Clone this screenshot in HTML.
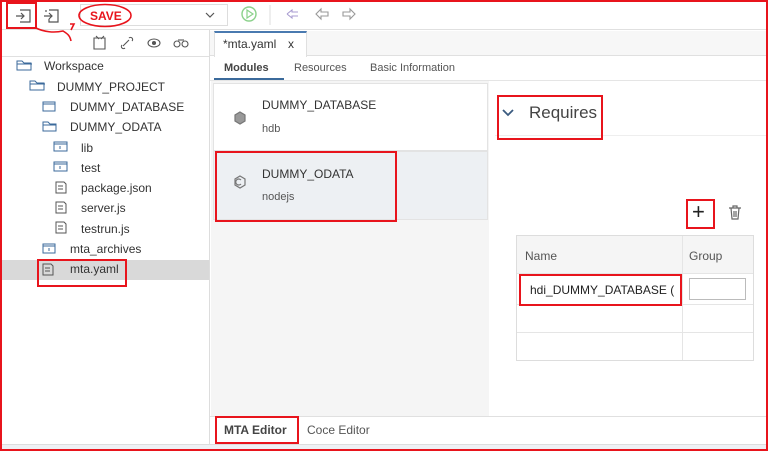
<!DOCTYPE html>
<html><head><style>
*{box-sizing:border-box;margin:0;padding:0}
body{width:768px;height:451px;position:relative;overflow:hidden;background:#fff;font-family:"Liberation Sans",sans-serif;color:#333}
.a{position:absolute}
.t{position:absolute;font-size:12px;color:#333;white-space:nowrap}
.red{position:absolute;border:2px solid #e8141c}
</style></head><body>
<div class="a" style="left:0;top:0;width:768px;height:30px;background:#fff;border-bottom:1px solid #e0e0e0"></div>
<div class="a" style="left:80px;top:4px;width:148px;height:22px;border:1px solid #ddd"></div>
<svg class="a" style="left:0;top:0" width="380" height="60">
<g fill="none" stroke="#555" stroke-width="1.2">
<path d="M20 10h10v12h-10M16 16h8M21 13l3 3-3 3"/>
<path d="M49 10h9v12h-9v-3M46 12v-2M44 16h8M49 13l3 3-3 3"/>
<path d="M206 13l4 4 4-4"/>
</g>
<circle cx="249" cy="14" r="7" fill="none" stroke="#8bd18b" stroke-width="1.4"/>
<path d="M247 10v8l6-4z" fill="none" stroke="#8bd18b" stroke-width="1.2"/>
<line x1="270" y1="5" x2="270" y2="25" stroke="#ddd"/>
<g fill="none" stroke="#a89bd0" stroke-width="1.1"><path d="M287 14l5-4v2h6M287 14l5 4v-2h6"/></g>
<g fill="none" stroke="#999" stroke-width="1.1"><path d="M316 14l5-5v3h7v4h-7v3z"/><path d="M355 14l-5-5v3h-7v4h7v3z"/></g>
<ellipse cx="105" cy="15.5" rx="26" ry="11" fill="none" stroke="#e8141c" stroke-width="1.6"/>
<path d="M36 28c8 4 18 5 27 3 5 3 7 5 8 10M70 24l4 0-3 6" fill="none" stroke="#e8141c" stroke-width="1.6"/>
<g fill="none" stroke="#555" stroke-width="1.1">
<path d="M94 38h11v11h-11zM96 36l3 3M104 36l-3 3"/>
<path d="M123 46l6-6M122 45a2 2 0 0 0 3 3M129 38a2 2 0 0 1 3 3"/>
<ellipse cx="154" cy="43" rx="6" ry="4"/><circle cx="154" cy="43" r="1.5" fill="#555"/>
<circle cx="177" cy="44" r="3"/><circle cx="185" cy="44" r="3"/><path d="M178 40h6"/>
</g>
</svg>
<div class="t" style="left:90px;top:9px;color:#e8141c;font-weight:bold;font-size:12px">SAVE</div>
<div class="red" style="left:6px;top:2px;width:31px;height:27px"></div>
<div class="a" style="left:0;top:56px;width:210px;height:1px;background:#e0e0e0"></div>
<div class="a" style="left:209px;top:30px;width:1px;height:421px;background:#ddd"></div>
<div class="a" style="left:2px;top:260px;width:207px;height:20px;background:#d9d9d9"></div>
<svg class="a" style="left:0;top:56px" width="210" height="230" fill="none" stroke="#3b6a9b" stroke-width="1">
<path d="M17 5h5l2 2h7v7h-14zM17 8h15"/>
<path d="M30 25h5l2 2h7v7h-14zM30 28h15"/>
<path d="M43 46h12v9h-12zM43 48h12"/>
<path d="M43 66h5l2 2h6v7h-13zM43 69h13"/>
<path d="M54 86h13v9h-13zM54 88h13M60 90v3"/>
<path d="M54 106h13v9h-13zM54 108h13M60 110v3"/>
<g stroke="#555"><path d="M56 126h8l2 2v9h-10zM58 130h5M58 133h5"/><path d="M56 146h8l2 2v9h-10zM58 150h5M58 153h5"/><path d="M56 166h8l2 2v9h-10zM58 170h5M58 173h5"/><path d="M43 208h8l2 2v9h-10zM45 212h5M45 215h5"/></g>
<path d="M43 188h12v9h-12zM43 190h12M49 192v3"/>
</svg>
<div class="t" style="left:44px;top:59px">Workspace</div>
<div class="t" style="left:57px;top:80px">DUMMY_PROJECT</div>
<div class="t" style="left:70px;top:100px">DUMMY_DATABASE</div>
<div class="t" style="left:70px;top:120px">DUMMY_ODATA</div>
<div class="t" style="left:81px;top:141px">lib</div>
<div class="t" style="left:81px;top:161px">test</div>
<div class="t" style="left:81px;top:181px">package.json</div>
<div class="t" style="left:81px;top:201px">server.js</div>
<div class="t" style="left:81px;top:222px">testrun.js</div>
<div class="t" style="left:70px;top:242px">mta_archives</div>
<div class="t" style="left:70px;top:262px">mta.yaml</div>
<div class="red" style="left:37px;top:259px;width:90px;height:28px"></div>
<div class="a" style="left:210px;top:31px;width:558px;height:25px;background:#f7f7f7;border-bottom:1px solid #e0e0e0"></div>
<div class="a" style="left:214px;top:31px;width:93px;height:26px;background:#fff;border:1px solid #e0e0e0;border-bottom:none;border-top:2px solid #4a7ab0"></div>
<div class="t" style="left:223px;top:37px">*mta.yaml</div>
<div class="t" style="left:288px;top:37px">x</div>
<div class="a" style="left:210px;top:80px;width:558px;height:1px;background:#e5e5e5"></div>
<div class="t" style="left:224px;top:62px;font-weight:bold;font-size:11px;color:#444">Modules</div>
<div class="a" style="left:214px;top:78px;width:70px;height:2px;background:#3b6a9b"></div>
<div class="t" style="left:294px;top:62px;font-size:11px;color:#555">Resources</div>
<div class="t" style="left:370px;top:62px;font-size:11px;color:#555">Basic Information</div>
<div class="a" style="left:211px;top:81px;width:278px;height:335px;background:#f5f5f5"></div>
<div class="a" style="left:213px;top:83px;width:275px;height:68px;background:#fff;border:1px solid #e3e3e3"></div>
<div class="a" style="left:213px;top:151px;width:275px;height:69px;background:#edf0f3;border:1px solid #e3e3e3"></div>
<svg class="a" style="left:230px;top:110px" width="20" height="80" fill="none" stroke="#777" stroke-width="1.2"><path d="M10 2l5 3v6l-5 3-5-3v-6z" fill="#999"/><path d="M10 66l5 3v6l-5 3-5-3v-6zM11 70a3 3 0 1 0 0 4"/></svg>
<div class="t" style="left:262px;top:98px;font-size:12px">DUMMY_DATABASE</div>
<div class="t" style="left:262px;top:123px;font-size:11px;color:#555">hdb</div>
<div class="t" style="left:262px;top:167px;font-size:12px">DUMMY_ODATA</div>
<div class="t" style="left:262px;top:191px;font-size:11px;color:#555">nodejs</div>
<div class="red" style="left:215px;top:151px;width:182px;height:71px"></div>
<div class="a" style="left:495px;top:135px;width:273px;height:1px;background:#eee"></div>
<svg class="a" style="left:501px;top:108px" width="14" height="10"><path d="M2 2l5 5 5-5" fill="none" stroke="#3b5b80" stroke-width="1.8"/></svg>
<div class="t" style="left:529px;top:103px;font-size:17px;color:#444">Requires</div>
<div class="red" style="left:497px;top:95px;width:106px;height:45px"></div>
<div class="t" style="left:692px;top:199px;font-size:22px;color:#222;font-weight:300">+</div>
<div class="red" style="left:686px;top:199px;width:29px;height:30px"></div>
<svg class="a" style="left:728px;top:205px" width="14" height="16" fill="none" stroke="#666" stroke-width="1.2"><path d="M1 3h12M5 3v-2h4v2M3 3l1 11h6l1-11M6 6v6M8 6v6"/></svg>
<div class="a" style="left:516px;top:235px;width:238px;height:126px;border:1px solid #ddd"></div>
<div class="a" style="left:517px;top:236px;width:236px;height:38px;background:#f5f5f5;border-bottom:1px solid #e5e5e5"></div>
<div class="a" style="left:682px;top:236px;width:1px;height:124px;background:#e5e5e5"></div>
<div class="a" style="left:517px;top:304px;width:236px;height:1px;background:#e5e5e5"></div>
<div class="a" style="left:517px;top:332px;width:236px;height:1px;background:#e5e5e5"></div>
<div class="t" style="left:525px;top:249px;color:#555">Name</div>
<div class="t" style="left:689px;top:249px;color:#555">Group</div>
<div class="t" style="left:530px;top:283px;font-size:12px;color:#222">hdi_DUMMY_DATABASE (</div>
<div class="red" style="left:519px;top:274px;width:163px;height:32px"></div>
<div class="a" style="left:689px;top:278px;width:57px;height:22px;border:1px solid #bbb"></div>
<div class="a" style="left:210px;top:416px;width:558px;height:1px;background:#e0e0e0"></div>
<div class="t" style="left:224px;top:423px;font-weight:bold;font-size:12px;color:#444">MTA Editor</div>
<div class="t" style="left:307px;top:423px;font-size:12px;color:#555">Coce Editor</div>
<div class="red" style="left:215px;top:416px;width:84px;height:28px"></div>
<div class="a" style="left:0;top:444px;width:768px;height:5px;background:#eef1f5;border-top:1px solid #ddd"></div>
<div class="a" style="left:0;top:0;width:768px;height:451px;border:2px solid #e8141c"></div>
</body></html>
